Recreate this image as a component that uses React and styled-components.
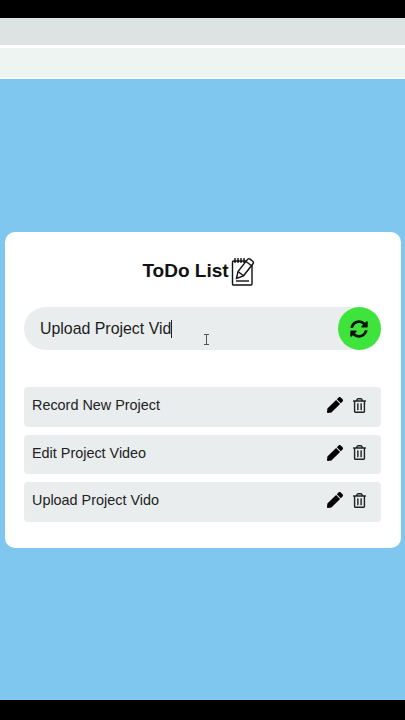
import React from "react";
import styled, { createGlobalStyle } from "styled-components";
import { FaPen, FaSyncAlt, FaRegTrashAlt } from "react-icons/fa";

const Global = createGlobalStyle`
  html, body {
    margin: 0;
    padding: 0;
    background: #000;
  }
`;

const Screen = styled.div`
  width: 405px;
  height: 720px;
  display: flex;
  flex-direction: column;
  background: #000;
  padding: 18px 0 20px;
  box-sizing: border-box;
  font-family: "Liberation Sans", Arial, sans-serif;
`;

const BrowserBar = styled.div`
  height: ${(p) => p.$height}px;
  flex-shrink: 0;
  box-sizing: border-box;
  background: ${(p) => p.$color};
  border-bottom: ${(p) => p.$line}px solid #fff;
`;

const Page = styled.main`
  flex: 1;
  background: #7fc7ef;
  padding: 153px 4px 0 5px;
`;

const Card = styled.section`
  height: 316px;
  background: #fff;
  border-radius: 10px;
  box-sizing: border-box;
  padding: 23px 20px 0 19px;
`;

const Heading = styled.h1`
  margin: 0 0 20px;
  height: 32px;
  display: flex;
  align-items: center;
  justify-content: center;
  gap: 2px;
  padding-right: 8px;
  font-size: 19px;
  font-weight: 700;
  color: #111;
`;

const InputWrap = styled.div`
  height: 43px;
  display: flex;
  align-items: center;
  justify-content: space-between;
  background: #e9edee;
  border-radius: 22px;
  margin-bottom: 37px;
`;

const TypedText = styled.span`
  padding-left: 16px;
  font-size: 15.9px;
  color: #1c1c1c;
  display: flex;
  align-items: center;
`;

const Caret = styled.i`
  width: 1px;
  height: 18px;
  background: #222;
`;

const SaveButton = styled.button`
  width: 43px;
  height: 43px;
  border: 0;
  border-radius: 50%;
  background: #3ee43c;
  color: #111;
  font-size: 18px;
  display: flex;
  align-items: center;
  justify-content: center;
  padding: 0 1px 0 0;
`;

const List = styled.ul`
  list-style: none;
  margin: 0;
  padding: 0;
  display: flex;
  flex-direction: column;
  gap: 8px;
`;

const Row = styled.li`
  height: 39.5px;
  box-sizing: border-box;
  display: flex;
  align-items: center;
  justify-content: space-between;
  background: #e9edee;
  border-radius: 4px;
  padding: 0 14px 3px 8px;
  font-size: 14.4px;
  color: #222;
`;

const Actions = styled.div`
  display: flex;
  align-items: center;
  gap: 9px;
`;

const EditIcon = styled(FaPen)`
  font-size: 16px;
  color: #000;
`;

const DeleteIcon = styled(FaRegTrashAlt)`
  font-size: 15px;
  color: #222;
`;

const Cursor = styled.svg`
  position: absolute;
  left: 203px;
  top: 334px;
`;

const NotepadIcon = () => (
  <svg width="24" height="30" viewBox="0 0 24 30" fill="none" stroke="#111" strokeWidth="1.4">
    <rect x="1.5" y="5" width="19.5" height="24" rx="1" />
    <path d="M4 2v5M7 2v5M10 2v5M13 2v5" />
    <path d="M5 25h13" />
    <path d="M5.5 22.5l1.5-7L16.6 3.4a1.8 1.8 0 0 1 2.5-.3l2.6 2.1a1.8 1.8 0 0 1 .3 2.5L12.5 19.8z" fill="#fff" />
    <path d="M7 15.5l5.5 4.3M15 5.5l5.5 4.3" />
  </svg>
);

const tasks = ["Record New Project", "Edit Project Video", "Upload Project Vido"];

export default function App() {
  return (
    <>
      <Global />
      <Screen>
        <BrowserBar $height={30} $color="#dde3e2" $line={3} />
        <BrowserBar $height={31} $color="#edf4f1" $line={2} />
        <Page>
          <Card>
            <Heading>
              ToDo List
              <NotepadIcon />
            </Heading>
            <InputWrap>
              <TypedText>
                Upload Project Vid
                <Caret />
              </TypedText>
              <SaveButton aria-label="Update">
                <FaSyncAlt />
              </SaveButton>
            </InputWrap>
            <List>
              {tasks.map((task) => (
                <Row key={task}>
                  {task}
                  <Actions>
                    <EditIcon />
                    <DeleteIcon />
                  </Actions>
                </Row>
              ))}
            </List>
          </Card>
        </Page>
      </Screen>
      <Cursor width="7" height="11" viewBox="0 0 7 11" fill="none" stroke="#555" strokeWidth="1">
        <path d="M1 .5h5M1 10.5h5M3.5 .5v10" />
      </Cursor>
    </>
  );
}
